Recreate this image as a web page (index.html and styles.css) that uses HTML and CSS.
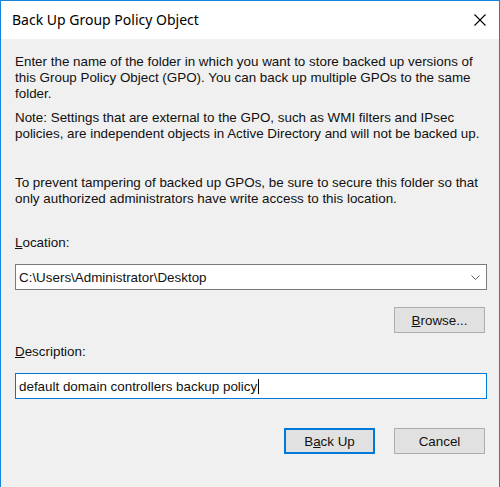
FILE: index.html
```html
<!DOCTYPE html>
<html>
<head>
<meta charset="utf-8">
<link rel="stylesheet" href="styles.css">
</head>
<body>
<div class="window">
  <div class="titlebar">
    <span class="title">Back Up Group Policy Object</span>
    <svg class="close" width="12" height="12" viewBox="0 0 12 12"><path d="M0.5 0.5 L11.5 11.5 M11.5 0.5 L0.5 11.5" stroke="#000" stroke-width="1.1" fill="none"/></svg>
  </div>
  <div class="content">
    <p class="p1">Enter the name of the folder in which you want to store backed up versions of<br>this Group Policy Object (GPO). You can back up multiple GPOs to the same<br>folder.</p>
    <p class="p2">Note: Settings that are external to the GPO, such as WMI filters and IPsec<br>policies, are independent objects in Active Directory and will not be backed up.</p>
    <p class="p3">To prevent tampering of backed up GPOs, be sure to secure this folder so that<br>only authorized administrators have write access to this location.</p>
    <div class="label lbl-loc"><u>L</u>ocation:</div>
    <div class="combo">
      <span class="field-text">C:\Users\Administrator\Desktop</span>
      <svg class="chev" width="9" height="5" viewBox="0 0 9 5"><path d="M0.5 0.5 L4.5 4.5 L8.5 0.5" stroke="#5a5a5a" stroke-width="1" fill="none"/></svg>
    </div>
    <div class="row browse-row">
      <div class="btn"><u>B</u>rowse...</div>
    </div>
    <div class="label lbl-desc"><u>D</u>escription:</div>
    <div class="textbox">
      <span class="field-text">default domain controllers backup policy</span><span class="caret"></span>
    </div>
    <div class="row actions">
      <div class="btn default">B<u>a</u>ck Up</div>
      <div class="btn">Cancel</div>
    </div>
  </div>
</div>
</body>
</html>
```

FILE: styles.css
```css
* { box-sizing: border-box; }
html, body { margin: 0; padding: 0; background: #f0f0f0; }
body { width: 500px; height: 487px; overflow: hidden; }

.window {
  width: 500px;
  height: 487px;
  border: 1px solid #1883d7;
  border-bottom: none;
  background: #f0f0f0;
  display: flex;
  flex-direction: column;
}

.titlebar {
  height: 38px;
  background: #ffffff;
  display: flex;
  align-items: center;
  justify-content: space-between;
  padding: 0 13px 2px 11px;
}
.title {
  font-family: "Noto Sans", "Open Sans", sans-serif;
  font-size: 14px;
  color: #000;
}
.close { display: block; margin-top: 1px; }

.content {
  padding: 15px 12px 0 14px;
  display: flex;
  flex-direction: column;
  font-family: "Liberation Sans", Arial, sans-serif;
  font-size: 13.4px;
  color: #111;
}

p { margin: 0; line-height: 16px; white-space: nowrap; }
.p2 { margin-top: 8px; }
.p3 { margin-top: 33px; }

.label { line-height: 16px; }
.lbl-loc { margin-top: 28px; }
.lbl-desc { margin-top: 11px; }

.combo, .textbox {
  height: 26px;
  background: #fff;
  display: flex;
  align-items: center;
  padding-left: 3px;
}
.combo {
  margin-top: 13px;
  border: 1px solid #7a7a7a;
  justify-content: space-between;
  padding-right: 6px;
}
.textbox {
  margin-top: 13px;
  border: 1px solid #0078d7;
}
.chev { display: block; }
.caret {
  display: inline-block;
  width: 1px;
  height: 15px;
  background: #000;
  margin-left: 1px;
}

.row { display: flex; justify-content: flex-end; padding-right: 2px; }
.browse-row { margin-top: 17px; }
.actions { margin-top: 29px; gap: 19px; }

.btn {
  width: 91px;
  height: 26px;
  background: #e1e1e1;
  border: 1px solid #adadad;
  display: flex;
  align-items: center;
  justify-content: center;
}
.btn.default { border: 2px solid #0078d7; }
```
